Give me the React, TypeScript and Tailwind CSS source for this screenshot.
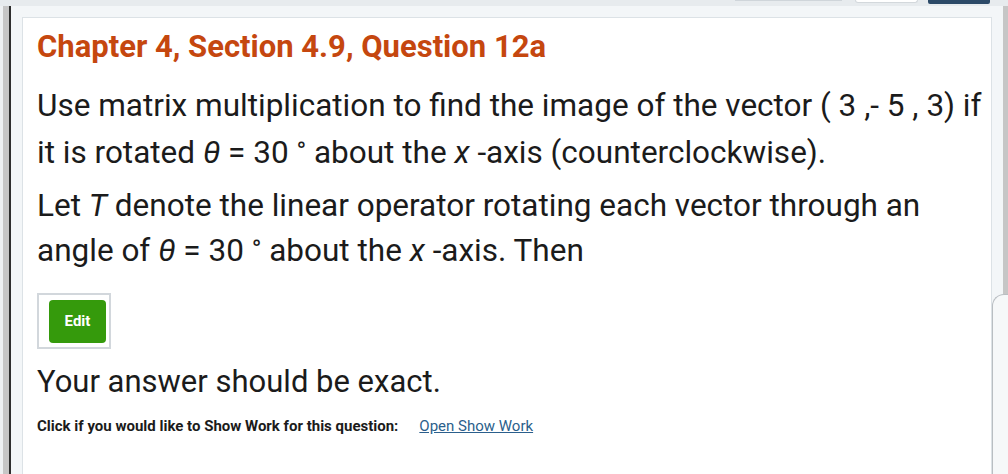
import React from "react";

const roboto = { fontFamily: "Roboto, 'Liberation Sans', sans-serif" };

function TopStrip() {
  return (
    <div className="flex h-[6px] shrink-0 items-start bg-[#e7ebee]">
      <div className="flex-1" />
      <div className="h-[1px] w-[107px] bg-[#cfd5da]" />
      <div className="ml-[13px] h-[3px] w-[63px] rounded-b-[3px] border-x border-b border-[#d3d8dc] bg-white" />
      <div className="ml-[10px] h-[4px] w-[62px] rounded-b-[2px] bg-[#2c4a68]" />
      <div className="w-[18px]" />
    </div>
  );
}

function Degree() {
  return <span className="relative -top-[3px] text-[26px] leading-none">°</span>;
}

function EditBox() {
  return (
    <div className="mt-[20px] flex h-[56px] w-[74px] items-center border-2 border-[#d2d7dc] bg-white pl-[10px]">
      <button
        type="button"
        className="flex h-[43px] w-[57px] items-center justify-center rounded-[4px] bg-[#359a0c] text-[15px] font-bold text-white"
      >
        Edit
      </button>
    </div>
  );
}

export default function App() {
  return (
    <div className="flex h-[474px] w-[1008px] flex-col overflow-hidden bg-[#f3f6f8]" style={roboto}>
      <TopStrip />
      <div className="flex flex-1">
        <div className="w-[3px] bg-[#eef1f3]" />
        <div className="w-[6px] bg-[#c6c6c6]" />
        <div className="w-[2px] bg-[#2e2e2e]" />

        <div className="flex-1 pl-[11px] pt-[11px]">
          <div className="h-full border-l border-t border-r border-[#dce2e6] bg-white pl-[14px] pt-[11px] text-[#1b1b1b]">
            <h1 className="text-[31px] font-bold leading-[36px] text-[#c5470f]">
              Chapter 4, Section 4.9, Question 12a
            </h1>

            <p className="mt-[17px] text-[31.5px] leading-[47px]">
              Use matrix multiplication to find the image of the vector ( 3 ,- 5 , 3) if it is
              rotated <i>θ</i> = 30 <Degree /> about the <i>x</i> -axis (counterclockwise).
            </p>
            <p className="mt-[7px] text-[31.5px] leading-[45px]">
              Let <i>T</i> denote the linear operator rotating each vector through an angle of{" "}
              <i>θ</i> = 30 <Degree /> about the <i>x</i> -axis. Then
            </p>

            <EditBox />

            <p className="mt-[13px] text-[31px] leading-[40px]">Your answer should be exact.</p>

            <div className="mt-[14px] flex items-center leading-[20px]">
              <span className="text-[15px] font-bold">
                Click if you would like to Show Work for this question:
              </span>
              <a href="#" className="ml-[21px] text-[15px] text-[#2b5f8c] underline">
                Open Show Work
              </a>
            </div>
          </div>
        </div>

        <div className="flex w-[16px] flex-col">
          <div className="flex h-[288px] justify-end">
            <div className="w-[5px] bg-[#c6c6c6]" />
          </div>
          <div className="flex-1 rounded-tl-[12px] border-l border-t border-[#b9bec2] bg-[#f6f8f9]" />
        </div>
      </div>
    </div>
  );
}
